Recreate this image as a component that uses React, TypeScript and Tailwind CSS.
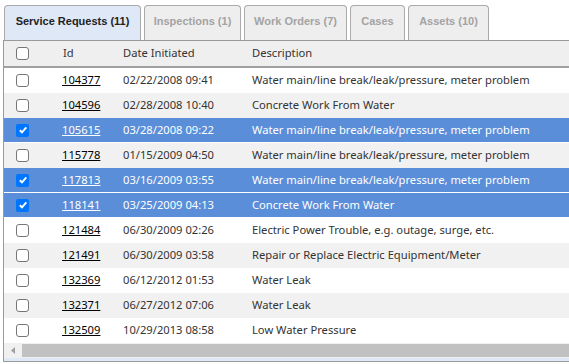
import React from "react";

type Row = {
  id: string;
  date: string;
  desc: string;
  selected?: boolean;
};

const tabs = [
  { label: "Service Requests (11)", w: "w-[137px]", active: true },
  { label: "Inspections (1)", w: "w-[97px]" },
  { label: "Work Orders (7)", w: "w-[103px]" },
  { label: "Cases", w: "w-[55px]" },
  { label: "Assets (10)", w: "w-[81px]" },
];

const rows: Row[] = [
  { id: "104377", date: "02/22/2008 09:41", desc: "Water main/line break/leak/pressure, meter problem" },
  { id: "104596", date: "02/28/2008 10:40", desc: "Concrete Work From Water" },
  { id: "105615", date: "03/28/2008 09:22", desc: "Water main/line break/leak/pressure, meter problem", selected: true },
  { id: "115778", date: "01/15/2009 04:50", desc: "Water main/line break/leak/pressure, meter problem" },
  { id: "117813", date: "03/16/2009 03:55", desc: "Water main/line break/leak/pressure, meter problem", selected: true },
  { id: "118141", date: "03/25/2009 04:13", desc: "Concrete Work From Water", selected: true },
  { id: "121484", date: "06/30/2009 02:26", desc: "Electric Power Trouble, e.g. outage, surge, etc." },
  { id: "121491", date: "06/30/2009 03:58", desc: "Repair or Replace Electric Equipment/Meter" },
  { id: "132369", date: "06/12/2012 01:53", desc: "Water Leak" },
  { id: "132371", date: "06/27/2012 07:06", desc: "Water Leak" },
  { id: "132509", date: "10/29/2013 08:58", desc: "Low Water Pressure" },
];

function Checkbox({ checked }: { checked?: boolean }) {
  if (checked) {
    return (
      <span className="flex h-[13px] w-[13px] items-center justify-center rounded-[2px] bg-[#0075ff]">
        <svg width="10" height="10" viewBox="0 0 10 10">
          <path d="M1.8 5.2 L4 7.3 L8.3 2.4" fill="none" stroke="white" strokeWidth="1.9" />
        </svg>
      </span>
    );
  }
  return <span className="block h-[13px] w-[13px] rounded-[3px] border border-[#767676] bg-white" />;
}

export default function App() {
  return (
    <div className="h-[364px] w-[569px] overflow-hidden bg-white font-['Noto_Sans',sans-serif] text-[11.2px]">
      <div className="flex gap-[3px] pl-[4px] pt-[5px] font-['Liberation_Sans',Arial,sans-serif] text-[11px] font-bold">
        {tabs.map((t) => (
          <div
            key={t.label}
            className={
              t.active
                ? `flex h-[35px] ${t.w} items-center justify-center rounded-t-[4px] border border-b-0 border-[#aaaaaa] bg-[#dfe8f6] pb-[3px] text-[#222]`
                : `flex h-[35px] ${t.w} items-center justify-center rounded-t-[4px] border border-b-0 border-[#aaaaaa] bg-[#eeeeee] pb-[3px] text-[#a3a3a3]`
            }
          >
            {t.label}
          </div>
        ))}
      </div>

      <div className="ml-[3px] border-b border-l border-[#9a9a9a] bg-[#dfe8f6] pb-[3px]">
        <div className="border-t border-[#9a9a9a] bg-white">
          <div className="flex h-[27px] items-center border-b-2 border-[#a0a0a0] bg-[#efefef] text-[#333]">
            <div className="w-[58px] pl-[12px]">
              <Checkbox />
            </div>
            <div className="w-[61px] pl-[1px]">Id</div>
            <div className="w-[129px]">Date Initiated</div>
            <div>Description</div>
          </div>

          {rows.map((r, i) => (
            <div
              key={r.id}
              className={
                r.selected
                  ? "flex h-[25px] items-center border-b border-white bg-[#5b8ed9] text-white"
                  : i % 2 === 1
                    ? "flex h-[25px] items-center bg-[#f1f1f1] text-[#333]"
                    : "flex h-[25px] items-center bg-white text-[#333]"
              }
            >
              <div className="w-[58px] pl-[12px]">
                <Checkbox checked={r.selected} />
              </div>
              <div className="w-[61px]">
                <span className={r.selected ? "underline" : "text-black underline"}>{r.id}</span>
              </div>
              <div className="w-[129px]">{r.date}</div>
              <div className="whitespace-nowrap">{r.desc}</div>
            </div>
          ))}

          <div className="flex h-[15px] items-center bg-[#f0f0f0]">
            <div className="flex w-[18px] justify-center">
              <svg width="4" height="7" viewBox="0 0 4 7">
                <path d="M4 0 L0 3.5 L4 7 Z" fill="#a0a0a0" />
              </svg>
            </div>
            <div className="h-[13px] flex-1 bg-[#c1c1c1]" />
          </div>
        </div>
      </div>
    </div>
  );
}
